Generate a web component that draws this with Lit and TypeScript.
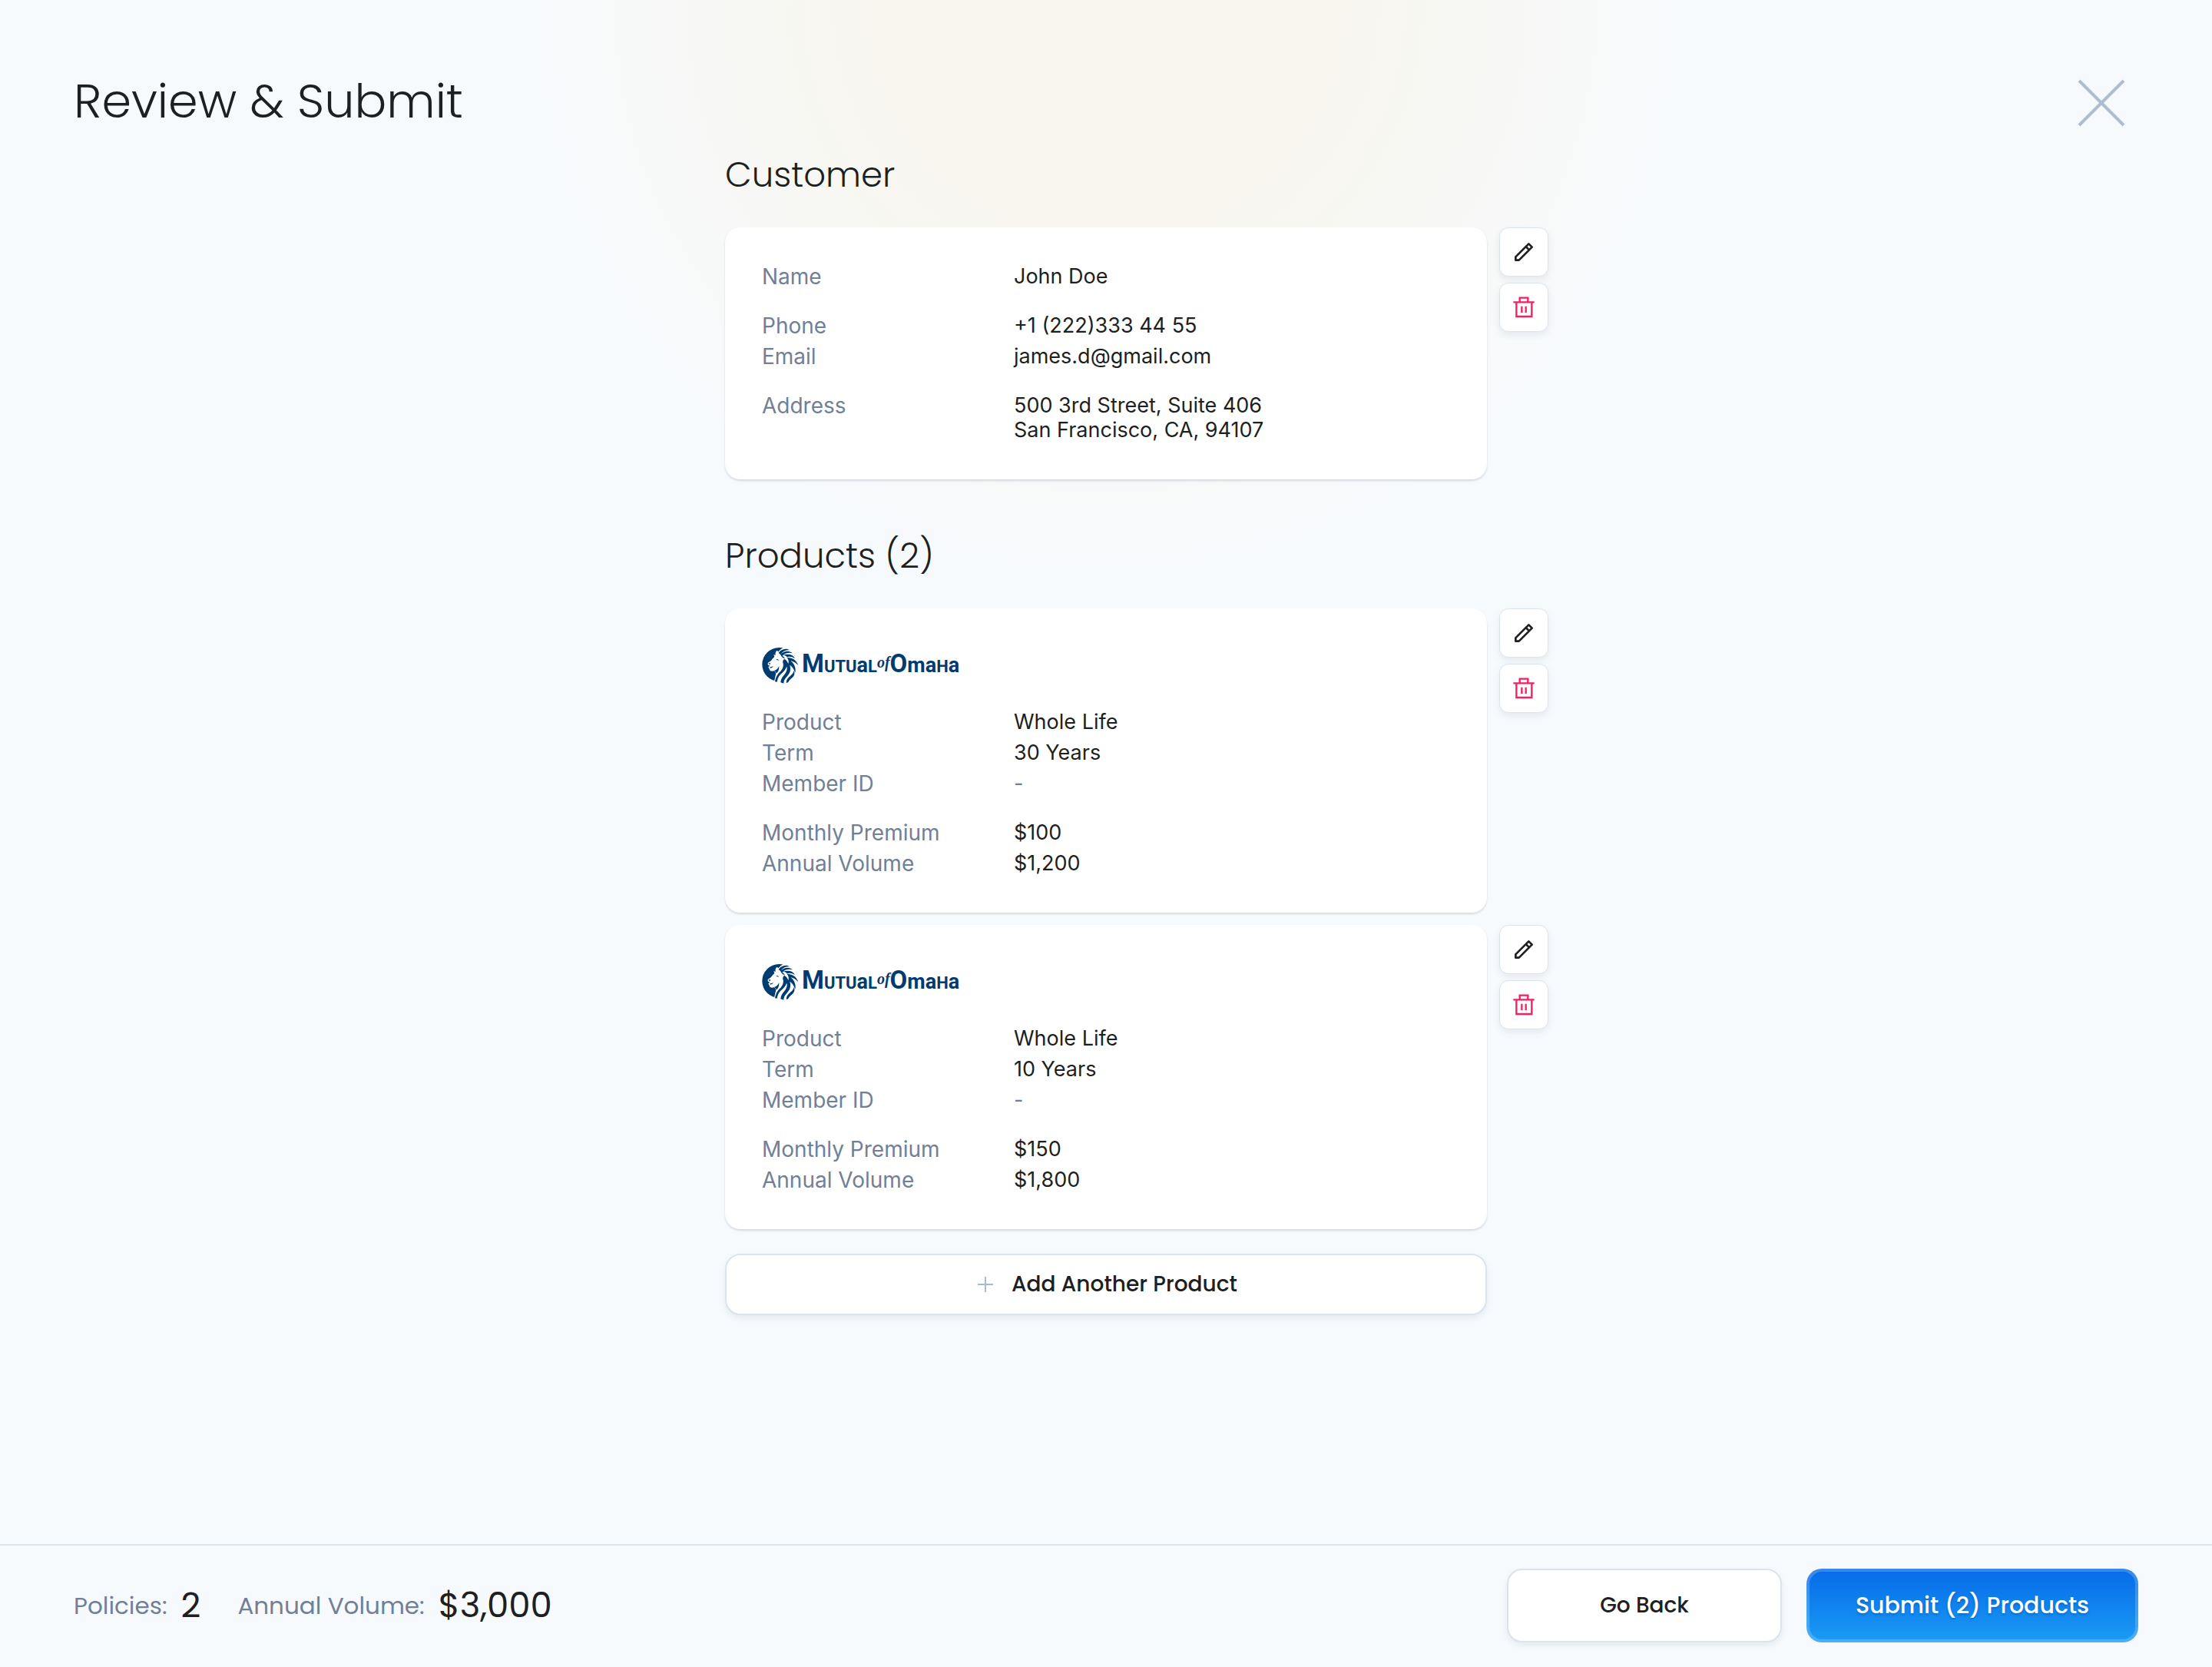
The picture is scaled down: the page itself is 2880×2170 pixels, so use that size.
import { LitElement, html, css, svg } from "lit";
import { customElement, property } from "lit/decorators.js";

type Row = { label: string; lines: string[]; muted?: boolean };
type Group = Row[];

const row = (label: string, ...lines: string[]): Row => ({ label, lines, muted: lines[0] === "-" });

const customer: Group[] = [
  [row("Name", "John Doe")],
  [row("Phone", "+1 (222)333 44 55"), row("Email", "james.d@gmail.com")],
  [row("Address", "500 3rd Street, Suite 406", "San Francisco, CA, 94107")],
];

const product = (term: string, premium: string, volume: string): Group[] => [
  [row("Product", "Whole Life"), row("Term", term), row("Member ID", "-")],
  [row("Monthly Premium", premium), row("Annual Volume", volume)],
];

const products = [product("30 Years", "$100", "$1,200"), product("10 Years", "$150", "$1,800")];

const pencilIcon = svg`<svg class="icon" viewBox="0 0 84 84" aria-hidden="true">
  <path d="M10 74V61L61 10L74 23L23 74Z M50 21L63 34" fill="none" stroke="currentColor" stroke-width="8" stroke-linejoin="round"/>
</svg>`;

const trashIcon = svg`<svg class="icon" viewBox="0 0 84 84" aria-hidden="true">
  <path d="M1 22H83M13 22V78H73V22M26 22V5H58V22" fill="none" stroke="currentColor" stroke-width="7"/>
  <path d="M34 38V63M50 38V63" fill="none" stroke="currentColor" stroke-width="7"/>
</svg>`;

@customElement("carrier-logo")
export class CarrierLogo extends LitElement {
  static styles = css`
    :host { display: flex; align-items: center; gap: 4px; height: 52px; color: #003b72; }
    .lion { width: 48px; height: 48px; flex: none; }
    .word { display: flex; align-items: baseline; font: 700 33px/52px Roboto, "Liberation Sans", sans-serif; white-space: nowrap; }
    .small { font-size: 22px; text-transform: uppercase; }
    .low { font-size: 27px; }
    .of { font: italic 700 20px/32px "Liberation Serif", serif; align-self: flex-start; padding-top: 8px; }
  `;
  render() {
    return html`
      <svg class="lion" viewBox="11 13 144 144" aria-hidden="true">
        <circle cx="78" cy="82" r="66" fill="currentColor"/>
        <path fill="#fff" d="M100 10C92 20 82 22 76 32L69 27C64 33 63 39 64 46L57 43L60 52C54 57 50 62 46 68L35 75C33 78 34 81 35 84L42 87L36 92C38 96 40 98 41 102C43 108 50 109 57 107C64 108 66 114 65 121L58 152L84 160L160 150L164 8Z"/>
        <path fill="currentColor" d="M66 60Q72 60 78 65Q71 68 66 60ZM36 78L44 75L43 83ZM42 92Q50 92 56 88Q52 96 44 96ZM58 106C67 104 74 98 78 88C79 102 74 112 67 117C66 111 63 108 58 106Z"/>
        <path fill="currentColor" d="M76 36C88 22 106 16 120 26C106 24 94 30 84 41C98 29 118 25 131 38C116 34 102 38 93 46C112 38 132 42 140 58C126 50 116 50 106 54C130 54 146 64 153 86C142 74 134 70 124 68C138 80 145 96 141 114C136 100 130 90 120 84C126 104 120 118 108 130C98 140 96 148 96 156L84 152C86 134 96 126 103 116C109 106 110 98 108 90C102 104 94 112 84 120C74 130 72 140 70 150L62 149C66 130 72 120 80 112C92 102 96 90 94 78C90 70 96 62 100 58C92 58 86 50 84 44Z"/>
        <path fill="#fff" d="M90 48C97 44 106 47 109 54C115 62 117 71 114 79C109 68 104 62 98 62C103 57 97 52 90 48Z"/>
        <path fill="currentColor" d="M136 106C142 118 136 130 124 138C118 143 116 147 113 152L106 154C106 142 112 136 118 130C128 122 134 116 136 106Z"/>
      </svg>
      <span class="word"><span>M</span><span class="small">utu</span><span class="low">a</span><span class="small">l</span><span class="of">of</span><span>O</span><span class="low">ma</span><span class="small">h</span><span class="low">a</span></span>
    `;
  }
}

@customElement("review-item")
export class ReviewItem extends LitElement {
  @property({ attribute: false }) groups: Group[] = [];
  @property() name = "";
  @property({ type: Boolean }) logo = false;

  static styles = css`
    :host { display: grid; grid-template-columns: 1fr minmax(0, 992px) 1fr; column-gap: 16px; }
    .card {
      grid-column: 2; display: flex; flex-direction: column; gap: 32px; padding: 48px;
      background: #fff; border-radius: 20px; box-shadow: 0 2px 3px rgba(40, 55, 70, 0.16);
    }
    .groups { display: flex; flex-direction: column; gap: 32px; margin: 0; }
    .group { display: flex; flex-direction: column; gap: 8px; }
    .row { display: grid; grid-template-columns: 328px 1fr; }
    dt, dd { margin: 0; font: 400 27px/32px Inter, "Liberation Sans", sans-serif; color: #1d1f21; }
    dt { font-size: 28px; }
    dt, .muted { color: #718096; }
    .line { display: block; }
    .actions { display: flex; flex-direction: column; align-items: flex-start; gap: 8px; }
    button {
      display: grid; place-items: center; width: 64px; height: 64px; padding: 0; box-sizing: border-box;
      color: #1d1f21; background: #fff; border: 1px solid #dbe3ee; border-radius: 12px;
      box-shadow: 0 4px 8px rgba(60, 80, 110, 0.09); cursor: pointer;
    }
    .delete { color: #f4205f; }
    .icon { width: 28px; height: 28px; }
  `;
  render() {
    return html`
      <div class="card">
        ${this.logo ? html`<carrier-logo></carrier-logo>` : ""}
        <dl class="groups">
          ${this.groups.map((g) => html`<div class="group">
            ${g.map((r) => html`<div class="row">
              <dt>${r.label}</dt>
              <dd class=${r.muted ? "muted" : ""}>${r.lines.map((l) => html`<span class="line">${l}</span>`)}</dd>
            </div>`)}
          </div>`)}
        </dl>
      </div>
      <div class="actions">
        <button type="button" aria-label="Edit ${this.name}">${pencilIcon}</button>
        <button type="button" class="delete" aria-label="Delete ${this.name}">${trashIcon}</button>
      </div>
    `;
  }
}

@customElement("app-root")
export class AppRoot extends LitElement {
  static styles = css`
    :host {
      display: flex; flex-direction: column; min-height: 100vh; color: #1d1f21;
      font-family: Poppins, "Open Sans", sans-serif;
      background: radial-gradient(circle 760px at 50% 0, #f9f6ed 0%, #f8f6ef 38%, #f7f8f6 70%, #f7fafd 100%) #f7fafd;
    }
    header { display: flex; align-items: center; justify-content: space-between; padding: 92px 96px 0; }
    h1 { margin: 0; font-size: 62px; font-weight: 300; line-height: 80px; }
    h2 { margin: 0; font-size: 45px; font-weight: 300; line-height: 64px; }
    button { font-family: inherit; cursor: pointer; box-sizing: border-box; }
    .close { display: grid; place-items: center; width: 96px; height: 80px; padding: 4px 0 0; border: 0; background: none; color: #afbdd1; }
    .close svg { width: 64px; height: 64px; }
    main { flex: 1; display: flex; flex-direction: column; gap: 68px; padding: 24px 96px; }
    .section { display: flex; flex-direction: column; gap: 36px; }
    .column { width: 100%; max-width: 992px; margin: 0 auto; }
    .list { display: flex; flex-direction: column; gap: 16px; }
    .white {
      color: inherit; background: #fff; border: 2px solid #dbe3ec; border-radius: 20px;
      font-size: 28px; font-weight: 500; box-shadow: 0 4px 8px rgba(60, 80, 110, 0.09);
    }
    .add { display: flex; align-items: center; justify-content: center; gap: 20px; height: 80px; margin-top: 16px; padding: 0; }
    .add svg { width: 28px; height: 28px; color: #a9b9d0; }
    footer {
      display: flex; align-items: center; justify-content: space-between;
      padding: 30px 96px 32px; border-top: 2px solid #dbe5ed; background: #f7fafd;
    }
    .stats, .stat, .buttons { display: flex; align-items: center; }
    .stats { gap: 48px; }
    .stat { gap: 18px; }
    .stat-label { font-size: 31px; font-weight: 400; line-height: 48px; color: #718096; }
    .stat-value { font-size: 45px; font-weight: 400; line-height: 48px; }
    .buttons { gap: 32px; }
    .back { width: 358px; height: 96px; }
    .submit {
      width: 432px; height: 96px; padding: 0; border: 4px solid rgba(255, 255, 255, 0.2); border-radius: 20px;
      color: #fff; font-size: 30px; font-weight: 500;
      text-shadow: 0 2px 3px rgba(0, 40, 100, 0.3);
      background: linear-gradient(#066ae8, #1a9cf5) border-box;
    }
  `;
  render() {
    return html`
      <header>
        <h1>Review &amp; Submit</h1>
        <button type="button" class="close" aria-label="Close">
          <svg viewBox="0 0 64 64" aria-hidden="true"><path d="M3 3L61 61M61 3L3 61" fill="none" stroke="currentColor" stroke-width="4"/></svg>
        </button>
      </header>
      <main>
        <section class="section">
          <h2 class="column">Customer</h2>
          <review-item name="customer" .groups=${customer}></review-item>
        </section>
        <section class="section">
          <h2 class="column">Products (${products.length})</h2>
          <div class="list">
            ${products.map((p, i) => html`<review-item logo name="product ${i + 1}" .groups=${p}></review-item>`)}
            <button type="button" class="white add column">
              <svg viewBox="0 0 28 28" aria-hidden="true"><path d="M4 14H24M14 4V24" fill="none" stroke="currentColor" stroke-width="2"/></svg>
              Add Another Product
            </button>
          </div>
        </section>
      </main>
      <footer>
        <div class="stats">
          <div class="stat"><span class="stat-label">Policies:</span><span class="stat-value">2</span></div>
          <div class="stat"><span class="stat-label">Annual Volume:</span><span class="stat-value">$3,000</span></div>
        </div>
        <div class="buttons">
          <button type="button" class="white back">Go Back</button>
          <button type="button" class="submit">Submit (${products.length}) Products</button>
        </div>
      </footer>
    `;
  }
}
